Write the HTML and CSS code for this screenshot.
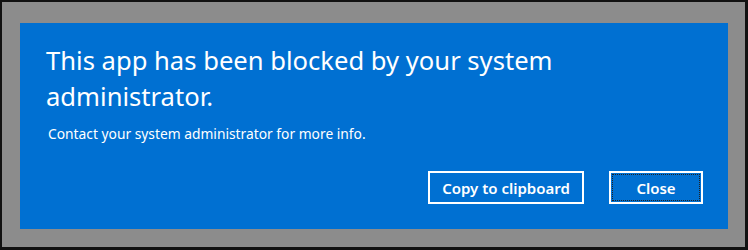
FILE: index.html
```html
<!DOCTYPE html>
<html lang="en">
<head>
    <meta charset="UTF-8">
    <title>App blocked</title>
    <link rel="stylesheet" href="styles.css">
</head>
<body>
    <div class="frame">
        <div class="dialog">
            <h1 class="title">This app has been blocked by your system administrator.</h1>
            <p class="subtitle">Contact your system administrator for more info.</p>
            <div class="actions">
                <button class="btn btn-copy">Copy to clipboard</button>
                <button class="btn btn-close"><span class="focus-ring">Close</span></button>
            </div>
        </div>
    </div>
</body>
</html>
```

FILE: styles.css
```css
body {
    margin: 0;
    font-family: 'Noto Sans', 'Open Sans', sans-serif;
}
.frame {
    width: 748px;
    height: 250px;
    box-sizing: border-box;
    background-color: #8c8c8c;
    border-style: solid;
    border-color: #111111;
    border-width: 2px 3px 3px 2px;
    padding: 21px 17px 18px 18px;
}
.dialog {
    height: 100%;
    background-color: #0070d2;
    color: #ffffff;
    padding: 0 25px 25px 26px;
    box-sizing: border-box;
    display: flex;
    flex-direction: column;
}
.title {
    margin: 0;
    padding-top: 20px;
    font-size: 25.6px;
    font-weight: 400;
    line-height: 36px;
}
.subtitle {
    margin: 9px 0 0 2px;
    font-size: 13.8px;
    line-height: 20px;
}
.actions {
    margin-top: auto;
    display: flex;
    justify-content: flex-end;
    gap: 25px;
}
.btn {
    height: 33px;
    border: 2px solid #ffffff;
    background-color: #0070d2;
    color: #ffffff;
    font-family: inherit;
    font-size: 15px;
    font-weight: 600;
    padding: 0;
}
.btn-copy {
    width: 156px;
}
.btn-close {
    width: 94px;
    padding: 1px;
}
.focus-ring {
    display: flex;
    align-items: center;
    justify-content: center;
    height: 100%;
    box-sizing: border-box;
    border: 1px dotted #222222;
}
```
